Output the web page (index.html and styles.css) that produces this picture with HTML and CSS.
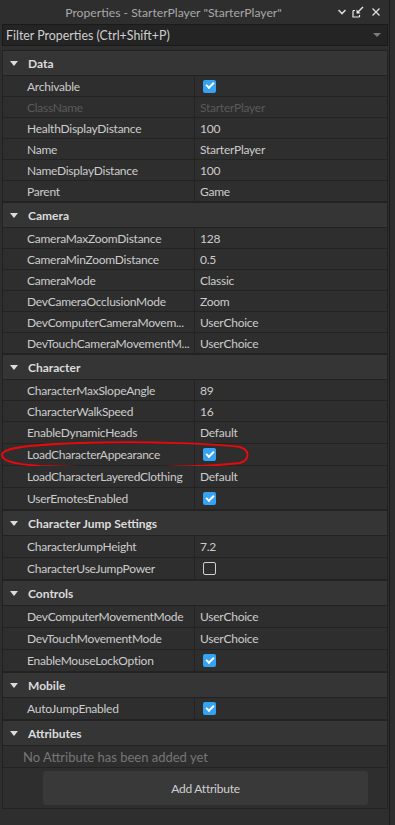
FILE: index.html
```html
<!DOCTYPE html>
<html>
<head>
<meta charset="utf-8">
<link rel="stylesheet" href="styles.css">
</head>
<body>
<div class="window">
  <div class="titlebar">
    <span class="title">Properties - StarterPlayer "StarterPlayer"</span>
    <div class="tb-icons">
      <svg class="ic-chev" width="10" height="8" viewBox="0 0 10 8"><path d="M1.5 2 L5 5.5 L8.5 2" fill="none" stroke="#d8d8d8" stroke-width="1.6"/></svg>
      <svg class="ic-dock" width="12" height="12" viewBox="0 0 12 12"><path d="M1 4.5 V11 H7.5" fill="none" stroke="#e6e6e6" stroke-width="1.2"/><path d="M1 4.5 H3 M7.5 11 V9" stroke="#e6e6e6" stroke-width="1.2"/><path d="M11 1 L5.5 6.5" stroke="#e6e6e6" stroke-width="1.5"/><path d="M4.5 3.5 V7.5 H8.5 Z" fill="#e6e6e6"/></svg>
      <svg class="ic-x" width="10" height="10" viewBox="0 0 10 10"><path d="M1.5 1.5 L8.5 8.5 M8.5 1.5 L1.5 8.5" stroke="#d8d8d8" stroke-width="1.4"/></svg>
    </div>
  </div>
  <div class="filter">
    <span>Filter Properties (Ctrl+Shift+P)</span>
    <span class="dd"></span>
  </div>
  <div class="list">
    <div class="section"><span class="tri"></span>Data</div>
    <div class="row s21"><span class="name">Archivable</span><span class="val"><span class="cb"></span></span></div>
    <div class="row s21"><span class="name dis">ClassName</span><span class="val dis">StarterPlayer</span></div>
    <div class="row s21"><span class="name">HealthDisplayDistance</span><span class="val">100</span></div>
    <div class="row s21"><span class="name">Name</span><span class="val">StarterPlayer</span></div>
    <div class="row s21"><span class="name">NameDisplayDistance</span><span class="val">100</span></div>
    <div class="row s21"><span class="name">Parent</span><span class="val">Game</span></div>

    <div class="section"><span class="tri"></span>Camera</div>
    <div class="row s21"><span class="name">CameraMaxZoomDistance</span><span class="val">128</span></div>
    <div class="row s21"><span class="name">CameraMinZoomDistance</span><span class="val">0.5</span></div>
    <div class="row s21"><span class="name">CameraMode</span><span class="val">Classic</span></div>
    <div class="row s21"><span class="name">DevCameraOcclusionMode</span><span class="val">Zoom</span></div>
    <div class="row s21"><span class="name">DevComputerCameraMovem...</span><span class="val">UserChoice</span></div>
    <div class="row s21"><span class="name">DevTouchCameraMovementM...</span><span class="val">UserChoice</span></div>

    <div class="section"><span class="tri"></span>Character</div>
    <div class="row s21"><span class="name">CharacterMaxSlopeAngle</span><span class="val">89</span></div>
    <div class="row s21"><span class="name">CharacterWalkSpeed</span><span class="val">16</span></div>
    <div class="row"><span class="name">EnableDynamicHeads</span><span class="val">Default</span></div>
    <div class="row"><span class="name">LoadCharacterAppearance</span><span class="val"><span class="cb"></span></span>
      <svg class="ring" width="252" height="30" viewBox="0 0 252 30"><path d="M80 2 C150 0 220 3 240 6 C250 9 250 19 240 22 C200 27 100 27 40 25 C10 23 2 19 2 14 C2 8 20 4 80 2 Z" fill="none" stroke="#e8090d" stroke-width="2"/></svg>
    </div>
    <div class="row"><span class="name">LoadCharacterLayeredClothing</span><span class="val">Default</span></div>
    <div class="row"><span class="name">UserEmotesEnabled</span><span class="val"><span class="cb"></span></span></div>

    <div class="section"><span class="tri"></span>Character Jump Settings</div>
    <div class="row"><span class="name">CharacterJumpHeight</span><span class="val">7.2</span></div>
    <div class="row"><span class="name">CharacterUseJumpPower</span><span class="val"><span class="cb off"></span></span></div>

    <div class="section"><span class="tri"></span>Controls</div>
    <div class="row"><span class="name">DevComputerMovementMode</span><span class="val">UserChoice</span></div>
    <div class="row"><span class="name">DevTouchMovementMode</span><span class="val">UserChoice</span></div>
    <div class="row"><span class="name">EnableMouseLockOption</span><span class="val"><span class="cb"></span></span></div>

    <div class="section"><span class="tri"></span>Mobile</div>
    <div class="row"><span class="name">AutoJumpEnabled</span><span class="val"><span class="cb"></span></span></div>

    <div class="section"><span class="tri"></span>Attributes</div>
    <div class="empty">No Attribute has been added yet</div>
    <div class="btnrow"><div class="btn">Add Attribute</div></div>
  </div>
</div>
</body>
</html>
```
FILE: styles.css
```css
* { box-sizing: border-box; }
html, body { margin: 0; padding: 0; }
body {
  width: 395px;
  height: 825px;
  background: #2e2e2e;
  font-family: Lato, "Open Sans", sans-serif;
  font-size: 12px;
  letter-spacing: -0.25px;
  color: #cccccc;
  overflow: hidden;
}
.window {
  width: 390px;
  height: 825px;
  background: #2e2e2e;
  border-right: 1px solid #1c1c1c;
}
.titlebar {
  height: 24px;
  display: flex;
  align-items: center;
  background: #2e2e2e;
}
.title {
  flex: 1;
  text-align: center;
  color: #a8a8a8;
  font-size: 12.2px;
  letter-spacing: 0;
  padding-left: 10px;
}
.tb-icons {
  display: flex;
  align-items: center;
  padding-right: 8px;
}
.ic-dock { margin-left: 5px; }
.ic-x { margin-left: 7px; }
.filter {
  margin: 0 1px 0 2px;
  height: 22px;
  background: #242424;
  border: 1px solid #1a1a1a;
  display: flex;
  align-items: center;
  justify-content: space-between;
  padding: 0 6px 0 3px;
  color: #cfcfcf;
  font-size: 12.4px;
  letter-spacing: 0;
}
.dd {
  width: 0; height: 0;
  border-left: 4px solid transparent;
  border-right: 4px solid transparent;
  border-top: 4px solid #7c7c7c;
}
.list {
  margin-top: 4px;
  margin-left: 2px;
  margin-right: 1px;
  border-left: 1px solid #222;
  border-right: 1px solid #222;
}
.section {
  height: 26px;
  background: #353535;
  border-top: 1px solid #222;
  border-bottom: 1px solid #222;
  display: flex;
  align-items: center;
  padding-left: 7px;
  font-weight: bold;
  color: #dcdcdc;
  font-size: 12px;
  letter-spacing: 0;
}
.tri {
  width: 0; height: 0;
  border-left: 4px solid transparent;
  border-right: 4px solid transparent;
  border-top: 5px solid #dcdcdc;
  margin-right: 10px;
}
.row {
  height: 22px;
  display: grid;
  grid-template-columns: 192px 1fr;
  border-bottom: 1px solid #232323;
  background: #2e2e2e;
  position: relative;
}
.row.s21 { height: 21px; }
.name {
  padding-left: 24px;
  display: flex;
  align-items: center;
  border-right: 1px solid #232323;
  white-space: nowrap;
  overflow: hidden;
}
.val {
  padding-left: 5px;
  display: flex;
  align-items: center;
  white-space: nowrap;
}
.dis { color: #5a5a5a; }
.cb {
  width: 13px;
  height: 13px;
  border-radius: 2px;
  background: #35a2f2;
  margin-left: 3px;
  position: relative;
}
.cb::after {
  content: "";
  position: absolute;
  left: 3px;
  top: 2.5px;
  width: 6px;
  height: 3px;
  border-left: 2px solid #fff;
  border-bottom: 2px solid #fff;
  transform: rotate(-45deg);
}
.cb.off {
  background: transparent;
  border: 1.5px solid #d0d0d0;
}
.cb.off::after { display: none; }
.ring {
  position: absolute;
  left: -3px;
  top: -3px;
  pointer-events: none;
}
.empty {
  height: 22px;
  display: flex;
  align-items: center;
  padding-left: 20px;
  color: #767676;
  font-size: 13px;
  letter-spacing: 0;
  border-bottom: 1px solid #232323;
}
.btnrow {
  padding: 3px 19px 3px 40px;
  border-bottom: 1px solid #232323;
}
.btn {
  height: 34px;
  background: #393939;
  border-radius: 3px;
  display: flex;
  align-items: center;
  justify-content: center;
  color: #cfcfcf;
}
```
